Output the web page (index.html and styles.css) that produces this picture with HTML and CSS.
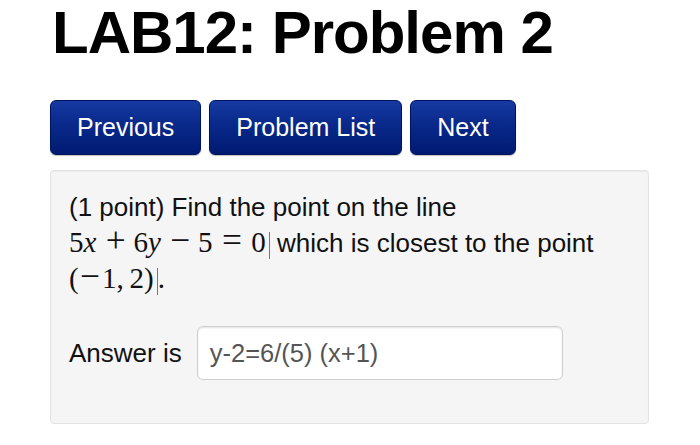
FILE: index.html
```html
<!DOCTYPE html>
<html>
<head>
<meta charset="utf-8">
<link rel="stylesheet" href="styles.css">
</head>
<body>
<div class="page">
  <h1 class="title">LAB12: Problem 2</h1>
  <div class="nav">
    <span class="btn">Previous</span>
    <span class="btn">Problem List</span>
    <span class="btn">Next</span>
  </div>
  <div class="panel">
    <p class="problem">(1 point) Find the point on the line <span class="math"><span class="mn">5</span><span class="mi">x</span><span class="mo bin">+</span><span class="mn">6</span><span class="mi">y</span><span class="mo bin">−</span><span class="mn">5</span><span class="mo rel">=</span><span class="mn">0</span><span class="caret"></span></span> which is closest to the point <span class="math"><span class="mn">(</span><span class="mo un">−</span><span class="mn">1</span><span class="mn comma">,</span><span class="mn">2</span><span class="mn">)</span><span class="caret"></span>.</span></p>
    <div class="answer">
      <span class="label">Answer is</span>
      <span class="field">y-2=6/(5) (x+1)</span>
    </div>
  </div>
</div>
</body>
</html>
```

FILE: styles.css
```css
html, body {
  margin: 0;
  padding: 0;
  background: #ffffff;
}
.page {
  padding: 0 52px 0 50px;
  font-family: "Liberation Sans", Arial, sans-serif;
  color: #111;
}
.title {
  margin: 0 0 0 2px;
  font-size: 60px;
  line-height: 66px;
  font-weight: bold;
  letter-spacing: -1px;
  color: #000;
}
.nav {
  display: flex;
  gap: 8px;
  margin-top: 34px;
}
.btn {
  display: flex;
  align-items: center;
  height: 53px;
  padding: 0 26px;
  border: 1px solid #00145e;
  border-radius: 6px;
  background: linear-gradient(#163aa2 0%, #0a2a8c 40%, #001a72 100%);
  color: #fff;
  font-size: 25px;
  box-shadow: 0 1px 1px rgba(0,0,0,0.25);
}
.panel {
  margin-top: 15px;
  width: 561px;
  padding: 18px 18px 43px 18px;
  background: #f5f5f5;
  border: 1px solid #e3e3e3;
  border-radius: 4px;
  box-shadow: inset 0 1px 1px rgba(0,0,0,0.04);
}
.problem {
  margin: 0;
  font-size: 26px;
  line-height: 36px;
  color: #111;
}
.math {
  font-family: "Liberation Serif", "Times New Roman", serif;
  font-size: 29px;
  line-height: 0.8;
  white-space: nowrap;
  color: #111;
}
.mi {
  font-style: italic;
  margin-right: 0.06em;
}
.mo {
  display: inline-block;
  font-size: 1.22em;
  width: 0.64em;
  text-align: center;
}
.bin {
  margin: 0 0.18em;
}
.rel {
  margin: 0 0.23em;
}
.un {
  margin-right: 0.02em;
}
.comma {
  margin-right: 0.2em;
}
.caret {
  display: inline-block;
  width: 0;
  height: 27px;
  border-left: 1px solid #777;
  vertical-align: -7px;
  margin-left: 3px;
}
.answer {
  display: flex;
  align-items: center;
  gap: 15px;
  margin-top: 29px;
}
.label {
  font-size: 26px;
  color: #111;
}
.field {
  display: flex;
  align-items: center;
  width: 352px;
  height: 52px;
  padding: 0 0 0 12px;
  background: #fff;
  border: 1px solid #cfcfcf;
  border-radius: 6px;
  box-shadow: inset 0 1px 2px rgba(0,0,0,0.12);
  font-size: 25.5px;
  color: #555;
}
```
